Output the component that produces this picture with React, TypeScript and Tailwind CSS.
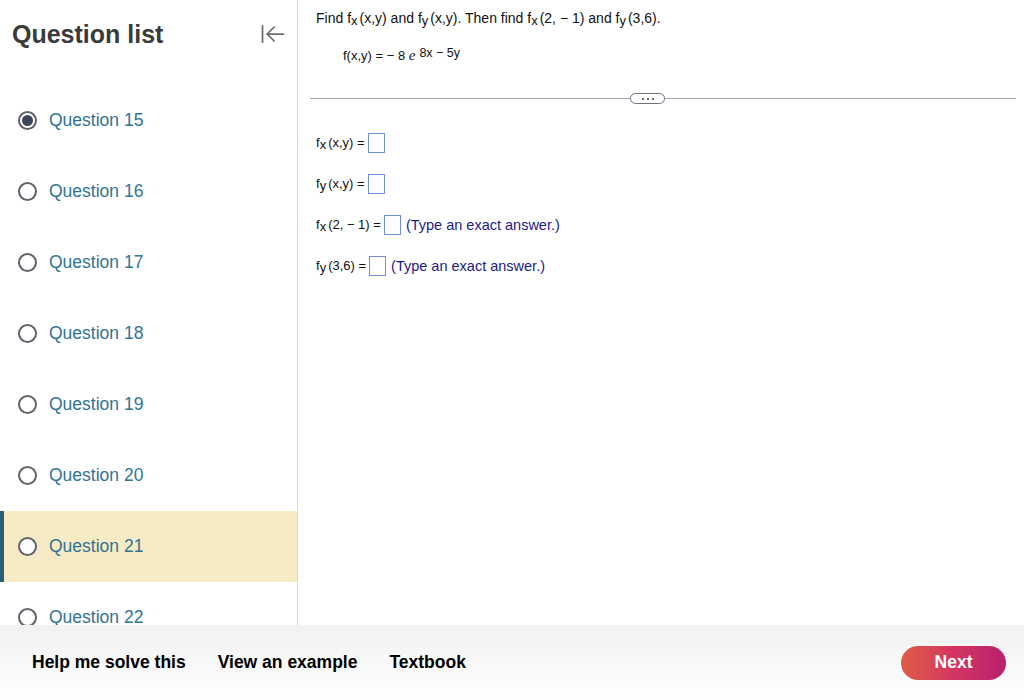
import { ArrowLeftToLine } from 'lucide-react'

const questions = [15, 16, 17, 18, 19, 20, 21, 22]

function Radio({ checked }: { checked?: boolean }) {
  return (
    <span className="flex size-[19px] shrink-0 items-center justify-center rounded-full border-2 border-[#5d636b] bg-white">
      {checked && <span className="size-[11px] rounded-full bg-[#3d4759]" />}
    </span>
  )
}

function Box() {
  return <span className="mx-[3px] inline-block h-[20px] w-[17px] border border-[#6f8fdc]" />
}

function F({ sub }: { sub: string }) {
  return (
    <>
      f<sub className="relative top-[2px] mr-[2px] text-[13px]">{sub}</sub>
    </>
  )
}

export default function App() {
  return (
    <div className="flex h-[700px] flex-col bg-white font-['Liberation_Sans',Arial,sans-serif]">
      <div className="flex min-h-0 flex-1">
        {/* Sidebar */}
        <aside className="flex w-[298px] shrink-0 flex-col overflow-hidden border-r border-[#d6d6e6]">
          <div className="flex h-[85px] shrink-0 items-start justify-between pl-[12px] pr-[10px] pt-[18px]">
            <h2 className="text-[25px] font-bold leading-[32px] text-[#3a3a3a]">Question list</h2>
            <ArrowLeftToLine className="mt-[2px] size-[28px] text-[#6b6b6b]" strokeWidth={1.5} />
          </div>
          <ul>
            {questions.map((q) => (
              <li
                key={q}
                className={
                  q === 21
                    ? 'flex h-[71px] items-center gap-[12px] border-l-4 border-[#2c5e78] bg-[#f7ebc5] pl-[14px]'
                    : 'flex h-[71px] items-center gap-[12px] pl-[18px]'
                }
              >
                <Radio checked={q === 15} />
                <span className="text-[17.5px] text-[#2f7496]">Question {q}</span>
              </li>
            ))}
          </ul>
        </aside>

        {/* Question */}
        <main className="flex flex-1 flex-col pt-[10px] text-[14px] leading-[16px] text-[#111]">
          <p className="pl-[18px]">
            Find <F sub="x" />(x,y) and <F sub="y" />(x,y). Then find <F sub="x" />(2, − 1) and <F sub="y" />(3,6).
          </p>
          <p className="mt-[21px] pl-[45px] text-[13px]">
            f(x,y) = − 8 <span className="font-['Liberation_Serif',serif] text-[15px] italic">e</span>
            <sup className="relative -top-[3px] ml-[4px] text-[12.5px]">8x − 5y</sup>
          </p>

          <div className="relative ml-[12px] mr-[8px] mt-[34px] h-px bg-[#9ea3ad]">
            <span className="absolute left-[320px] top-[-5px] flex h-[11px] w-[35px] items-center justify-center gap-[3px] rounded-full border border-[#6b7280] bg-white">
              <span className="size-[2px] rounded-full bg-[#333]" />
              <span className="size-[2px] rounded-full bg-[#333]" />
              <span className="size-[2px] rounded-full bg-[#333]" />
            </span>
          </div>

          <div className="mt-[23px] flex flex-col pl-[18px] text-[13px]">
            <div className="flex h-[41px] items-center">
              <span><F sub="x" />(x,y) =</span>
              <Box />
            </div>
            <div className="flex h-[41px] items-center">
              <span><F sub="y" />(x,y) =</span>
              <Box />
            </div>
            <div className="flex h-[41px] items-center">
              <span><F sub="x" />(2, − 1) =</span>
              <Box />
              <span className="ml-[2px] text-[14.5px] text-[#1a1a8c]">(Type an exact answer.)</span>
            </div>
            <div className="flex h-[41px] items-center">
              <span><F sub="y" />(3,6) =</span>
              <Box />
              <span className="ml-[2px] text-[14.5px] text-[#1a1a8c]">(Type an exact answer.)</span>
            </div>
          </div>
        </main>
      </div>

      {/* Footer */}
      <footer className="flex h-[75px] shrink-0 items-center bg-gradient-to-b from-[#f1f1f1] to-white pl-[32px] pr-[18px]">
        <nav className="flex gap-[32px] text-[17.5px] font-bold text-black">
          <button>Help me solve this</button>
          <button>View an example</button>
          <button>Textbook</button>
        </nav>
        <button className="ml-auto h-[34px] w-[105px] rounded-full bg-gradient-to-r from-[#de5c44] via-[#d33462] to-[#b7216d] text-[17.5px] font-bold text-white">
          Next
        </button>
      </footer>
    </div>
  )
}
